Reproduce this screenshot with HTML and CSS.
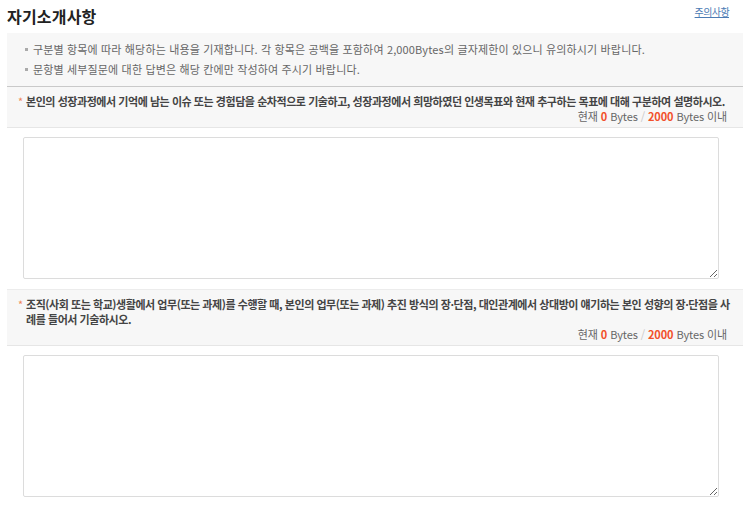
FILE: index.html
```html
<!DOCTYPE html>
<html lang="ko">
<head>
<meta charset="utf-8">
<title>자기소개사항</title>
<link rel="stylesheet" href="styles.css">
</head>
<body>
<div class="page">
  <div class="top">
    <h2 class="title">자기소개사항</h2>
    <a class="caution" href="#">주의사항</a>
  </div>
  <div class="notice">
    <ul class="notice-list">
      <li>구분별 항목에 따라 해당하는 내용을 기재합니다. 각 항목은 공백을 포함하여 2,000Bytes의 글자제한이 있으니 유의하시기 바랍니다.</li>
      <li>문항별 세부질문에 대한 답변은 해당 칸에만 작성하여 주시기 바랍니다.</li>
    </ul>
  </div>

  <div class="q q-first">
    <div class="q-head">
      <div class="q-title"><span class="star">*</span><span class="q-text">본인의 성장과정에서 기억에 남는 이슈 또는 경험담을 순차적으로 기술하고, 성장과정에서 희망하였던 인생목표와 현재 추구하는 목표에 대해 구분하여 설명하시오.</span></div>
      <div class="bytes">현재 <em class="num">0</em> Bytes <span class="slash">/</span> <em class="num">2000</em> Bytes 이내</div>
    </div>
    <div class="q-body"><textarea class="answer"></textarea></div>
  </div>

  <div class="q">
    <div class="q-head">
      <div class="q-title"><span class="star">*</span><span class="q-text">조직(사회 또는 학교)생활에서 업무(또는 과제)를 수행할 때, 본인의 업무(또는 과제) 추진 방식의 장·단점, 대인관계에서 상대방이 얘기하는 본인 성향의 장·단점을 사례를 들어서 기술하시오.</span></div>
      <div class="bytes">현재 <em class="num">0</em> Bytes <span class="slash">/</span> <em class="num">2000</em> Bytes 이내</div>
    </div>
    <div class="q-body"><textarea class="answer"></textarea></div>
  </div>
</div>
</body>
</html>
```

FILE: styles.css
```css
html, body {
  margin: 0;
  padding: 0;
  background: #fff;
}
body {
  font-family: "Noto Sans CJK KR", "Noto Sans", "Liberation Sans", sans-serif;
  color: #333;
}
.page {
  padding-left: 7px;
}
.top {
  display: flex;
  justify-content: space-between;
  align-items: flex-start;
  height: 33px;
}
.title {
  margin: 0;
  padding-top: 5px;
  font-size: 16px;
  line-height: 22px;
  font-weight: 700;
  color: #222;
  letter-spacing: 0.2px;
}
.caution {
  margin-top: 4px;
  margin-right: 14px;
  font-size: 10px;
  line-height: 16px;
  color: #4c7bb4;
  letter-spacing: -0.6px;
  text-decoration: underline;
}
.notice {
  background: #f7f7f7;
  border-bottom: 1px solid #c9c9c9;
  padding: 6px 0 7px 18px;
}
.notice-list {
  list-style: none;
  margin: 0;
  padding: 0;
}
.notice-list li {
  display: flex;
  align-items: center;
  font-size: 11px;
  line-height: 20px;
  color: #666;
  letter-spacing: 0.15px;
}
.notice-list li::before {
  content: "";
  width: 3px;
  height: 3px;
  background: #aaa;
  margin-right: 5px;
  flex: none;
}
.q-head {
  background: #f7f7f7;
  border-bottom: 1px solid #e6e6e6;
  border-top: 1px solid #ececec;
  padding: 7px 12px 4px 11px;
}
.q-first .q-head {
  border-top: 0;
}
.q-title {
  display: flex;
  font-size: 11px;
  line-height: 15px;
  font-weight: 700;
  color: #444;
  letter-spacing: -0.45px;
}
.star {
  flex: none;
  width: 8px;
  color: #f0865a;
  font-weight: 400;
}
.q-text {
  flex: 1;
  word-break: break-all;
}
.bytes {
  text-align: right;
  font-size: 11px;
  line-height: 14px;
  color: #666;
  padding-right: 4px;
  letter-spacing: -0.1px;
}
.num {
  font-style: normal;
  font-weight: 700;
  color: #f2512b;
}
.slash {
  color: #c8c8c8;
}
.q-body {
  padding: 9px 24px 10px 16px;
}
.answer {
  display: block;
  box-sizing: border-box;
  width: 100%;
  height: 142px;
  margin: 0;
  border: 1px solid #dcdcdc;
  border-radius: 2px;
  background: #fff;
  font-family: inherit;
}
```
